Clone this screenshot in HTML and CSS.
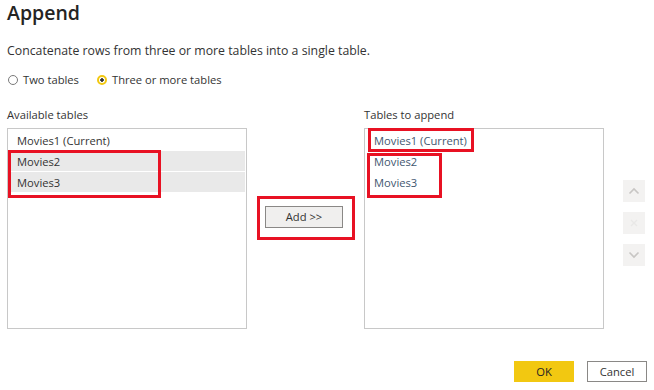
FILE: index.html
```html
<!DOCTYPE html>
<html lang="en">
<head>
    <meta charset="UTF-8">
    <title>Append</title>
    <link rel="stylesheet" href="styles.css">
</head>
<body>
    <div class="dialog">
        <h1 class="title">Append</h1>
        <p class="desc">Concatenate rows from three or more tables into a single table.</p>

        <!-- Mode radios -->
        <div class="radios">
            <label class="radio"><span class="dot"></span>Two tables</label>
            <label class="radio checked"><span class="dot"></span>Three or more tables</label>
        </div>

        <div class="columns">
            <div class="col">
                <div class="col-label">Available tables</div>
                <div class="listbox">
                    <div class="item">Movies1 (Current)</div>
                    <div class="item selected">Movies2</div>
                    <div class="item selected">Movies3</div>
                    <div class="mark mark-left"></div>
                </div>
            </div>

            <div class="middle">
                <div class="add-mark">
                    <button class="btn add">Add &gt;&gt;</button>
                </div>
            </div>

            <div class="col">
                <div class="col-label">Tables to append</div>
                <div class="listbox picked">
                    <div class="item">Movies1 (Current)</div>
                    <div class="item">Movies2</div>
                    <div class="item">Movies3</div>
                    <div class="mark mark-r1"></div>
                    <div class="mark mark-r2"></div>
                </div>
            </div>

            <!-- Reorder buttons -->
            <div class="order">
                <div class="order-btn">
                    <svg width="12" height="8" viewBox="0 0 12 8"><polyline points="1.5,6.5 6,2 10.5,6.5" fill="none" stroke="#c8c6c4" stroke-width="1.6"/></svg>
                </div>
                <div class="order-btn">
                    <svg width="10" height="10" viewBox="0 0 10 10"><path d="M2 2 L8 8 M8 2 L2 8" fill="none" stroke="#e9e8e7" stroke-width="1.4"/></svg>
                </div>
                <div class="order-btn">
                    <svg width="12" height="8" viewBox="0 0 12 8"><polyline points="1.5,1.5 6,6 10.5,1.5" fill="none" stroke="#c8c6c4" stroke-width="1.6"/></svg>
                </div>
            </div>
        </div>

        <div class="footer">
            <button class="btn ok">OK</button>
            <button class="btn cancel">Cancel</button>
        </div>
    </div>
</body>
</html>
```

FILE: styles.css
```css
body {
    margin: 0;
    background: #fff;
    font-family: "Open Sans", "Noto Sans", sans-serif;
    color: #333;
}

.dialog {
    width: 654px;
    height: 390px;
    padding: 0 7px;
    box-sizing: border-box;
}

.title {
    margin: 0;
    font-size: 19.5px;
    font-weight: 600;
    line-height: 26px;
    color: #252423;
}

.desc {
    margin: 16px 0 0;
    font-size: 12.3px;
    line-height: 18px;
    color: #333;
}

/* Radios */
.radios {
    display: flex;
    gap: 17px;
    margin-top: 11px;
    font-size: 11.2px;
    line-height: 18px;
}

.radio {
    display: flex;
    align-items: center;
    gap: 5px;
}

.radio .dot {
    width: 10px;
    height: 10px;
    border: 1.7px solid #7a7a7a;
    border-radius: 50%;
    box-sizing: border-box;
    margin-left: 1px;
}

.radio.checked .dot {
    border: 2px solid #f2c811;
    background: radial-gradient(circle, #333 0 1.5px, #fff 2px);
}

/* Columns */
.columns {
    display: flex;
    margin-top: 17px;
}

.col {
    width: 240px;
}

.col-label {
    font-size: 11.2px;
    line-height: 18px;
    height: 18px;
    color: #333;
    margin-bottom: 4px;
}

.listbox {
    position: relative;
    height: 201px;
    border: 1px solid #c8c8c8;
    box-sizing: border-box;
    padding: 1px 1px 0;
    font-size: 11.2px;
}

.item {
    height: 20px;
    line-height: 21px;
    margin-bottom: 1px;
    padding-left: 8px;
    color: #333;
}

.item.selected {
    background: #e9e9e9;
}

.picked .item {
    color: #3f5770;
}

/* Red annotation boxes */
.mark {
    position: absolute;
    border: 3px solid #e81123;
    box-sizing: border-box;
}

.mark-left {
    left: 0;
    top: 21px;
    width: 153px;
    height: 48px;
}

.mark-r1 {
    left: 3px;
    top: -1px;
    width: 106px;
    height: 24px;
}

.mark-r2 {
    left: 2px;
    top: 24px;
    width: 75px;
    height: 45px;
}

.middle {
    width: 117px;
    padding: 90px 0 0 10px;
    box-sizing: border-box;
}

.add-mark {
    width: 98px;
    height: 44px;
    border: 3px solid #e81123;
    box-sizing: border-box;
    padding: 5px 0 0 5px;
}

.btn {
    font-family: inherit;
    font-size: 11.2px;
    cursor: pointer;
    padding: 0;
    box-sizing: border-box;
}

.add {
    width: 78px;
    height: 22px;
    background: #f0efee;
    border: 1.5px solid #8a8886;
    color: #333;
}

.order {
    margin-left: 19px;
    padding-top: 74px;
    display: flex;
    flex-direction: column;
    gap: 10px;
}

.order-btn {
    width: 22px;
    height: 22px;
    background: #f3f2f1;
    display: flex;
    align-items: center;
    justify-content: center;
}

/* Footer */
.footer {
    display: flex;
    justify-content: flex-end;
    gap: 13px;
    margin-top: 32px;
}

.ok {
    width: 60px;
    height: 21px;
    background: #f2c811;
    border: none;
    color: #252423;
}

.cancel {
    width: 60px;
    height: 21px;
    background: #fff;
    border: 1.5px solid #8a8886;
    color: #333;
}
```
